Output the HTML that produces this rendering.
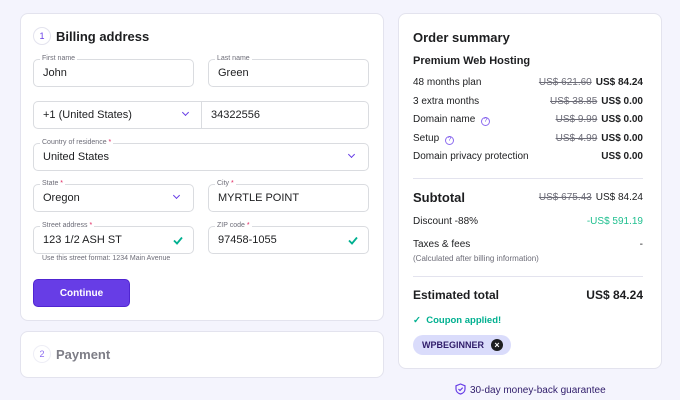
<!DOCTYPE html>
<html><head><style>
*{box-sizing:border-box;margin:0;padding:0}
body{width:680px;height:400px;background:#f4f4fd;font-family:"Liberation Sans",sans-serif;color:#1d1e20;position:relative;overflow:hidden}
.card{position:absolute;background:#fff;border:1px solid #e3e3ee;border-radius:8px}
.f{position:absolute;border:1px solid #dadce0;border-radius:5px;height:28px;font-size:11px;padding:0 9px;display:flex;align-items:center}
.lb{position:absolute;top:-5px;left:6px;background:#fff;padding:0 2px;font-size:7px;color:#6d6d78;line-height:8px}
.lb i{color:#e0245e;font-style:normal}
.chev{position:absolute;right:14px;top:10px;width:5px;height:5px;border-right:1.5px solid #673de6;border-bottom:1.5px solid #673de6;transform:rotate(45deg);margin-top:-2px}
.ck{position:absolute;right:10px;top:9px}
.t{position:absolute;font-size:10px;white-space:nowrap}
.r{position:absolute;right:18px;font-size:10px;white-space:nowrap;text-align:right}
s{color:#6d6d78;margin-right:4px}
b{font-weight:bold}
.q{display:inline-block;width:9px;height:9px;border:1.3px solid #8c6cf0;border-radius:50%;font-size:6px;color:#673de6;text-align:center;line-height:7px;margin-left:6px;vertical-align:0}
</style></head><body>
<div class="card" style="left:20px;top:13px;width:364px;height:308px">
  <div style="position:absolute;left:12px;top:13px;width:18px;height:18px;border:1px solid #e3e3ee;border-radius:50%;font-size:9px;color:#673de6;text-align:center;line-height:16px">1</div>
  <div style="position:absolute;left:35px;top:15px;font-size:13px;font-weight:bold">Billing address</div>
</div>
<div class="f" style="left:33px;top:59px;width:161px"><span class="lb">First name</span>John</div>
<div class="f" style="left:208px;top:59px;width:161px"><span class="lb">Last name</span>Green</div>
<div class="f" style="left:33px;top:101px;width:169px;border-radius:5px 0 0 5px">+1 (United States)<span class="chev" style="right:13px"></span></div>
<div class="f" style="left:201px;top:101px;width:168px;border-radius:0 5px 5px 0">34322556</div>
<div class="f" style="left:33px;top:143px;width:336px"><span class="lb">Country of residence <i>*</i></span>United States<span class="chev"></span></div>
<div class="f" style="left:33px;top:184px;width:161px"><span class="lb">State <i>*</i></span>Oregon<span class="chev"></span></div>
<div class="f" style="left:208px;top:184px;width:161px"><span class="lb">City <i>*</i></span>MYRTLE POINT</div>
<div class="f" style="left:33px;top:226px;width:161px"><span class="lb">Street address <i>*</i></span>123 1/2 ASH ST<svg class="ck" width="10" height="9" viewBox="0 0 10 9"><path d="M1 4.5L4 7.5L9 1.5" stroke="#00b090" stroke-width="1.8" fill="none"/></svg></div>
<div class="f" style="left:208px;top:226px;width:161px"><span class="lb">ZIP code <i>*</i></span>97458-1055<svg class="ck" width="10" height="9" viewBox="0 0 10 9"><path d="M1 4.5L4 7.5L9 1.5" stroke="#00b090" stroke-width="1.8" fill="none"/></svg></div>
<div class="t" style="left:42px;top:255px;font-size:7px;color:#6d6d78">Use this street format: 1234 Main Avenue</div>
<div style="position:absolute;left:33px;top:279px;width:97px;height:28px;background:#673de6;border:1px solid #5025d1;border-radius:5px;color:#fff;font-size:10px;font-weight:bold;display:flex;align-items:center;justify-content:center">Continue</div>
<div class="card" style="left:20px;top:331px;width:364px;height:47px">
  <div style="position:absolute;left:12px;top:13px;width:18px;height:18px;border:1px solid #eeeef6;border-radius:50%;font-size:9px;color:#8c6cf0;text-align:center;line-height:16px">2</div>
  <div style="position:absolute;left:35px;top:15px;font-size:13px;font-weight:bold;color:#7d7d86">Payment</div>
</div>
<div class="card" style="left:398px;top:13px;width:264px;height:356px">
  <div class="t" style="left:14px;top:16px;font-size:13px;font-weight:bold">Order summary</div>
  <div class="t" style="left:14px;top:41px;font-size:11px;font-weight:bold">Premium Web Hosting</div>
  <div class="t" style="left:14px;top:63px">48 months plan</div><div class="r" style="top:63px"><s>US$ 621.60</s><b>US$ 84.24</b></div>
  <div class="t" style="left:14px;top:82px">3 extra months</div><div class="r" style="top:82px"><s>US$ 38.85</s><b>US$ 0.00</b></div>
  <div class="t" style="left:14px;top:100px">Domain name<span class="q">?</span></div><div class="r" style="top:100px"><s>US$ 9.99</s><b>US$ 0.00</b></div>
  <div class="t" style="left:14px;top:119px">Setup<span class="q">?</span></div><div class="r" style="top:119px"><s>US$ 4.99</s><b>US$ 0.00</b></div>
  <div class="t" style="left:14px;top:137px">Domain privacy protection</div><div class="r" style="top:137px"><b>US$ 0.00</b></div>
  <div style="position:absolute;left:14px;right:18px;top:164px;border-top:1px solid #e3e3ee"></div>
  <div class="t" style="left:14px;top:176px;font-size:13px;font-weight:bold">Subtotal</div><div class="r" style="top:178px"><s>US$ 675.43</s>US$ 84.24</div>
  <div class="t" style="left:14px;top:202px">Discount -88%</div><div class="r" style="top:202px;color:#1fbf8f">-US$ 591.19</div>
  <div class="t" style="left:14px;top:225px">Taxes &amp; fees</div><div class="r" style="top:225px">-</div>
  <div class="t" style="left:14px;top:240px;font-size:8px;color:#6d6d78">(Calculated after billing information)</div>
  <div style="position:absolute;left:14px;right:18px;top:262px;border-top:1px solid #e3e3ee"></div>
  <div class="t" style="left:14px;top:274px;font-size:12px;font-weight:bold">Estimated total</div><div class="r" style="top:274px;font-size:12px;font-weight:bold">US$ 84.24</div>
  <div class="t" style="left:14px;top:301px;color:#00b090;font-weight:bold;font-size:9.5px">✓&nbsp; Coupon applied!</div>
  <div style="position:absolute;left:14px;top:321px;width:98px;height:20px;background:#dadcfb;border-radius:10px;font-size:9px;font-weight:bold;color:#2f1c6a;padding-left:9px;line-height:20px">WPBEGINNER<span style="position:absolute;right:8px;top:4px;width:12px;height:12px;background:#1d1e20;border-radius:50%;color:#fff;font-size:9px;line-height:12px;text-align:center">×</span></div>
</div>
<div class="t" style="left:455px;top:383px;font-size:10px;color:#2f1c6a"><svg width="11" height="12" viewBox="0 0 11 12" style="vertical-align:-2px;margin-right:4px"><path d="M5.5 1L1 2.8V6c0 2.6 2 4.4 4.5 5 2.5-.6 4.5-2.4 4.5-5V2.8z" stroke="#673de6" stroke-width="1.2" fill="none"/><path d="M3.5 6l1.5 1.5L7.7 4.7" stroke="#673de6" stroke-width="1.2" fill="none"/></svg>30-day money-back guarantee</div>
</body></html>
